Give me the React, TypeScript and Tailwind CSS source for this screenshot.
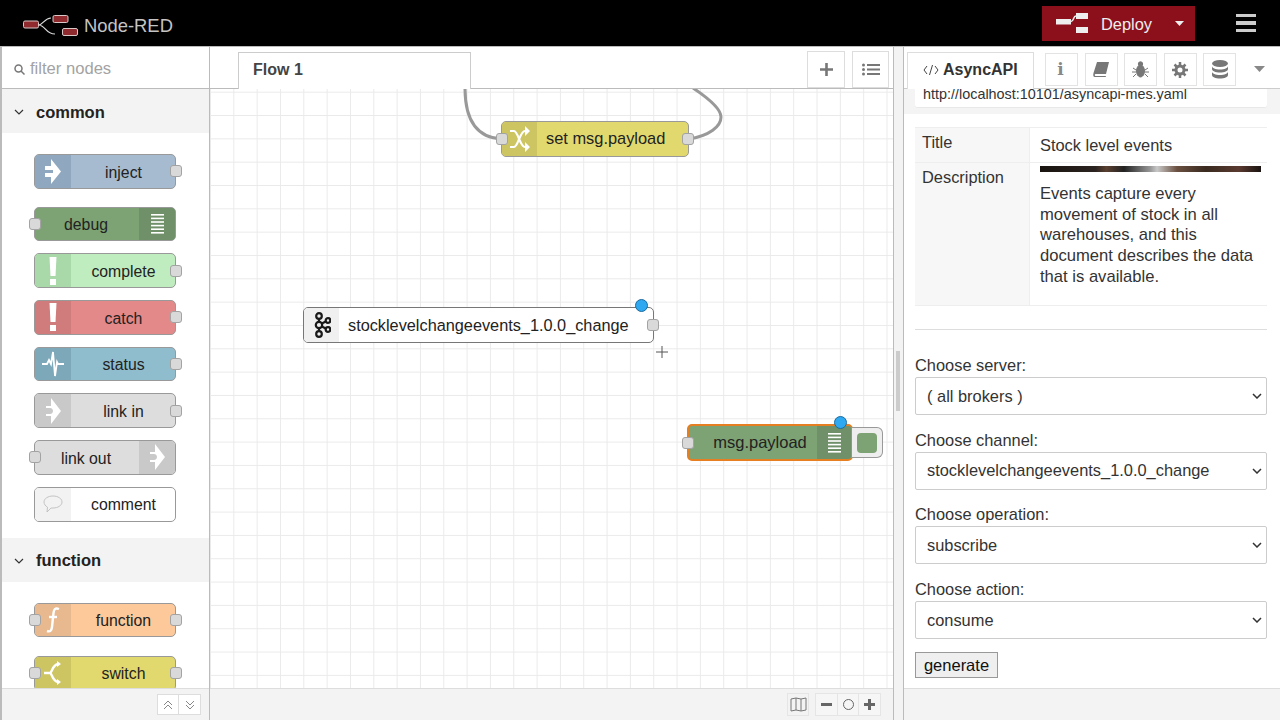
import type { ReactNode } from 'react';

const font = "font-['Liberation_Sans',Arial,sans-serif]";

function Port({ side, className = '' }: { side: 'left' | 'right'; className?: string }) {
  return (
    <span
      className={`absolute top-1/2 -translate-y-1/2 w-[12px] h-[12px] rounded-[3px] bg-[#d9d9d9] border border-[#a3a3a3] ${
        side === 'left' ? '-left-[6px]' : '-right-[7px]'
      } ${className}`}
    />
  );
}

function InjectIcon() {
  return (
    <svg width="16" height="25" viewBox="0 0 16 25" fill="#fff">
      <path d="M6 0l10 12.500L6 25v-7H0v-4h8v-3H0V7h6z" />
    </svg>
  );
}

function ListIcon() {
  return (
    <svg width="13" height="20" viewBox="0 0 13 20" fill="#fff">
      <rect y="0" width="13" height="1.600" />
      <rect y="3.600" width="13" height="1.600" />
      <rect y="7.200" width="13" height="1.600" />
      <rect y="10.800" width="13" height="1.600" />
      <rect y="14.400" width="13" height="1.600" />
      <rect y="18" width="13" height="1.600" />
    </svg>
  );
}

function AlertIcon() {
  return (
    <svg width="8" height="28" viewBox="0 0 8 28" fill="#fff">
      <path d="M0.500 0h7l-1 19h-5z" />
      <rect x="1" y="22" width="6" height="6" />
    </svg>
  );
}

function StatusIcon() {
  return (
    <svg width="22" height="26" viewBox="0 0 22 26" fill="none" stroke="#fff" strokeWidth="1.800">
      <path d="M0 13h5l2-4 2 4 2-12 2 24 2-14 1 2h6" />
    </svg>
  );
}

function LinkIcon() {
  return (
    <svg width="15" height="26" viewBox="0 0 15 26" fill="#fff">
      <path d="M5 0l10 13L5 26v-8H0v-2h4c4 0 4-6 0-6H0V8h5z" />
    </svg>
  );
}

function CommentIcon() {
  return (
    <svg width="20" height="18" viewBox="0 0 20 18" fill="none" stroke="#bdbdbd" strokeWidth="0.900">
      <path d="M10 1c5 0 9 2.600 9 6s-4 6-9 6H8l-4 4 .5-4.800C2.500 11 1 9.200 1 7c0-3.400 4-6 9-6z" />
    </svg>
  );
}

function FunctionIcon() {
  return (
    <svg width="14" height="26" viewBox="0 0 14 26" fill="none" stroke="#fff" strokeWidth="2.400">
      <path d="M13 2c-4-1.500-5 .5-5.500 4L6 20c-.5 4-2 5-5 4" />
      <path d="M3 10h8" />
    </svg>
  );
}

function SwitchIcon() {
  return (
    <svg width="18" height="24" viewBox="0 0 18 24" fill="none" stroke="#fff" strokeWidth="2.400">
      <path d="M0 12h6c2 0 2-8 8-9M6 12c2 0 2 8 8 9" />
      <path d="M13 0l4 3-4 3zM13 18l4 3-4 3z" fill="#fff" stroke="none" />
    </svg>
  );
}

function ShuffleIcon() {
  return (
    <svg width="20" height="26" viewBox="0 0 20 26" fill="none" stroke="#fff" strokeWidth="2.200">
      <path d="M0 5h4c4 0 6 16 11 16h1M0 21h4c4 0 6-16 11-16h1" />
      <path d="M15 0l5 5-5 5zM15 16l5 5-5 5z" fill="#fff" stroke="none" />
    </svg>
  );
}

function KafkaIcon() {
  return (
    <svg width="18" height="26" viewBox="0 0 18 26" fill="none" stroke="#1a1a1a" strokeWidth="2.200">
      <circle cx="6" cy="4" r="2.800" />
      <circle cx="6" cy="13" r="3.200" />
      <circle cx="6" cy="22" r="2.800" />
      <circle cx="15" cy="8.500" r="2.300" />
      <circle cx="15" cy="17.500" r="2.300" />
      <path d="M6 7v3M6 16v3M8.800 11.500l4-2M8.800 14.500l4 2" />
    </svg>
  );
}

function PaletteNode({
  label,
  bg,
  dark,
  border = 'border-[#999]',
  icon,
  right,
  inPort,
  outPort,
  className = '',
}: {
  label: string;
  bg: string;
  dark: string;
  border?: string;
  icon: ReactNode;
  right?: boolean;
  inPort?: boolean;
  outPort?: boolean;
  className?: string;
}) {
  return (
    <div className={`relative w-[142px] h-[34.700px] rounded-[5px] border ${border} ${bg} ${className}`}>
      <div className={`flex h-full ${right ? 'flex-row-reverse' : ''}`}>
        <div
          className={`w-[36px] shrink-0 flex items-center justify-center ${dark} ${
            right ? 'rounded-r-[4px]' : 'rounded-l-[4px]'
          }`}
        >
          {icon}
        </div>
        <div className={`flex-1 flex items-center justify-center text-[15.800px] pt-[2px] text-[#222] ${right ? 'pr-[2px]' : 'pl-[1px]'}`}>
          {label}
        </div>
      </div>
      {inPort && <Port side="left" />}
      {outPort && <Port side="right" />}
    </div>
  );
}

function CategoryHeader({ label }: { label: string }) {
  return (
    <div className="h-[44px] bg-[#f3f3f3] flex items-center pl-[12px] gap-[12px] pt-[2px]">
      <svg width="10" height="6" viewBox="0 0 10 6" fill="none" stroke="#333" strokeWidth="1.200">
        <path d="M1 1l4 4 4-4" />
      </svg>
      <span className="text-[16.500px] font-bold text-[#222]">{label}</span>
    </div>
  );
}

function Palette() {
  return (
    <aside className="w-[210px] shrink-0 flex flex-col border-l-2 border-r border-[#bbb] bg-white">
      <div className="h-[42px] shrink-0 flex items-center pl-[12px] gap-[5px] border-b border-[#bbb] pt-[3px]">
        <svg width="11" height="11" viewBox="0 0 11 11" fill="none" stroke="#777" strokeWidth="1.500">
          <circle cx="4.500" cy="4.500" r="3.500" />
          <path d="M7 7l3.500 3.500" />
        </svg>
        <span className="text-[16.600px] text-[#a3a3a3]">filter nodes</span>
      </div>
      <div className="flex-1 overflow-hidden">
        <CategoryHeader label="common" />
        <div className="pl-[32px] pt-[21px] pb-[16px] flex flex-col gap-[12px]">
          <PaletteNode label="inject" bg="bg-[#a6bbcf]" dark="bg-[#8fa8c0]" icon={<InjectIcon />} outPort />
          <PaletteNode label="debug" bg="bg-[#7da274]" dark="bg-[#6f9068]" icon={<ListIcon />} right inPort className="mt-[6px]" />
          <PaletteNode label="complete" bg="bg-[#c0edc0]" dark="bg-[#a9d8a9]" icon={<AlertIcon />} outPort />
          <PaletteNode label="catch" bg="bg-[#e48989]" dark="bg-[#d07c7c]" icon={<AlertIcon />} outPort />
          <PaletteNode label="status" bg="bg-[#8fbdce]" dark="bg-[#7da8b9]" icon={<StatusIcon />} outPort />
          <PaletteNode label="link in" bg="bg-[#dddddd]" dark="bg-[#c9c9c9]" icon={<LinkIcon />} outPort />
          <PaletteNode label="link out" bg="bg-[#dddddd]" dark="bg-[#c9c9c9]" icon={<LinkIcon />} right inPort />
          <PaletteNode label="comment" bg="bg-white" dark="bg-[#f2f2f2]" icon={<CommentIcon />} />
        </div>
        <CategoryHeader label="function" />
        <div className="pl-[32px] pt-[21px] flex flex-col gap-[18.700px]">
          <PaletteNode label="function" bg="bg-[#fdc89a]" dark="bg-[#e8b88f]" icon={<FunctionIcon />} inPort outPort />
          <PaletteNode label="switch" bg="bg-[#e2d96e]" dark="bg-[#cdc562]" icon={<SwitchIcon />} inPort outPort />
        </div>
      </div>
      <div className="h-[32px] shrink-0 bg-[#f3f3f3] border-t border-[#ddd] flex items-center justify-end pr-[8px]">
        <span className="w-[22px] h-[21px] bg-white border border-[#ddd] flex items-center justify-center">
          <svg width="10" height="10" viewBox="0 0 10 10" fill="none" stroke="#888" strokeWidth="1">
            <path d="M1 5l4-4 4 4M1 9l4-4 4 4" />
          </svg>
        </span>
        <span className="w-[22px] h-[21px] bg-white border border-l-0 border-[#ddd] flex items-center justify-center">
          <svg width="10" height="10" viewBox="0 0 10 10" fill="none" stroke="#888" strokeWidth="1">
            <path d="M1 1l4 4 4-4M1 5l4 4 4-4" />
          </svg>
        </span>
      </div>
    </aside>
  );
}

function Canvas() {
  return (
    <div className="relative flex-1 overflow-hidden bg-white bg-[linear-gradient(#eaeaea_1px,transparent_1px),linear-gradient(90deg,#eaeaea_1px,transparent_1px)] bg-[size:23.330px_23.330px] bg-[position:0px_2.700px]">
      <svg className="absolute inset-0" width="683" height="601" fill="none" stroke="#999" strokeWidth="3">
        <path d="M292 50C270 49 255 35 255 -1" />
        <path d="M478 50C500 47 511 37 511 28C511 19 495 7 483 -1" />
      </svg>

      {/* set msg.payload */}
      <div className="absolute left-[291px] top-[32px] w-[188px] h-[35.500px] rounded-[5px] border border-[#999] bg-[#e2d96e] flex">
        <div className="w-[35px] rounded-l-[4px] bg-[#cdc562] flex items-center justify-center">
          <ShuffleIcon />
        </div>
        <div className="flex-1 pl-[9px] flex items-center text-[16.400px] text-[#222]">set msg.payload</div>
        <Port side="left" />
        <Port side="right" className="mr-[1px]" />
      </div>

      {/* stocklevel node */}
      <div className="absolute left-[93px] top-[218px] w-[351px] h-[36px] rounded-[5px] border border-[#777] bg-white flex">
        <div className="w-[35px] rounded-l-[4px] bg-[#f0f0f0] flex items-center justify-center">
          <KafkaIcon />
        </div>
        <div className="flex-1 pl-[9px] flex items-center text-[16.300px] text-[#222]">stocklevelchangeevents_1.0.0_change</div>
        <Port side="right" className="mr-[1px]" />
        <span className="absolute right-[5px] -top-[9px] w-[13px] h-[13px] rounded-full bg-[#2ea8f0] border border-[#1a6ba0]" />
      </div>
      <svg className="absolute left-[446px] top-[257px]" width="12" height="12" stroke="#555" strokeWidth="1">
        <path d="M6 0v12M0 6h12" />
      </svg>

      {/* msg.payload debug node */}
      <div className="absolute left-[477px] top-[335px] w-[166px] h-[37px] rounded-[5px] border-[2.500px] border-[#e67e22] bg-[#7da274] flex">
        <div className="flex-1 pl-[14px] flex items-center justify-center text-[16.500px] text-[#222]">msg.payload</div>
        <div className="w-[34px] rounded-r-[3px] bg-[#6f9068] flex items-center justify-center">
          <ListIcon />
        </div>
        <Port side="left" className="-ml-[1.500px]" />
        <span className="absolute right-[4px] -top-[10px] w-[13px] h-[13px] rounded-full bg-[#2ea8f0] border border-[#1a6ba0]" />
      </div>
      <div className="absolute left-[642px] top-[338px] w-[31px] h-[31px] rounded-r-[6px] border border-l-0 border-[#999] bg-[#eeeeee] flex items-center justify-center">
        <span className="w-[20px] h-[20px] rounded-[4px] bg-[#7da274]" />
      </div>
    </div>
  );
}

function Workspace() {
  return (
    <section className="flex-1 min-w-0 flex flex-col">
      <div className="h-[42px] shrink-0 flex items-end pl-[28px] pr-[4px] border-b border-[#bbb] bg-white relative">
        <div className="w-[233px] h-[37px] -mb-px bg-white border border-b-0 border-[#ccc] flex items-center pl-[14px] pb-[2px] text-[16px] font-bold text-[#444]">
          Flow 1
        </div>
        <div className="ml-auto flex gap-[7px] self-center pt-[3px]">
          <span className="w-[38px] h-[37px] border border-[#ddd] flex items-center justify-center">
            <svg width="13" height="13" viewBox="0 0 13 13" stroke="#777" strokeWidth="2.600">
              <path d="M6.500 0v13M0 6.500h13" />
            </svg>
          </span>
          <span className="w-[37px] h-[37px] border border-[#ddd] flex items-center justify-center">
            <svg width="18" height="13" viewBox="0 0 18 13" fill="#777">
              <circle cx="1.500" cy="2" r="1.500" />
              <circle cx="1.500" cy="6.500" r="1.500" />
              <circle cx="1.500" cy="11" r="1.500" />
              <rect x="5" y="1" width="13" height="2" />
              <rect x="5" y="5.500" width="13" height="2" />
              <rect x="5" y="10" width="13" height="2" />
            </svg>
          </span>
        </div>
      </div>
      <Canvas />
      <div className="h-[32px] shrink-0 bg-[#f3f3f3] border-t border-[#ddd] flex items-center justify-end pr-[12px] gap-[6px]">
        <span className="w-[22px] h-[23px] border border-[#e5e5e5] flex items-center justify-center">
          <svg width="17" height="15" viewBox="0 0 17 15" fill="none" stroke="#777" strokeWidth="1">
            <path d="M1 2l5-1 5 1 5-1v12l-5 1-5-1-5 1zM6 1v12M11 2v12" />
          </svg>
        </span>
        <div className="flex h-[23px] border border-[#e5e5e5] bg-[#f6f6f6]">
          <span className="w-[21px] flex items-center justify-center">
            <span className="w-[11px] h-[3px] bg-[#666]" />
          </span>
          <span className="w-[22px] border-x border-[#e5e5e5] flex items-center justify-center">
            <span className="w-[11px] h-[11px] rounded-full border-[1.500px] border-[#666]" />
          </span>
          <span className="w-[21px] flex items-center justify-center">
            <svg width="11" height="11" viewBox="0 0 11 11" stroke="#666" strokeWidth="3">
              <path d="M5.500 0v11M0 5.500h11" />
            </svg>
          </span>
        </div>
      </div>
    </section>
  );
}

function TabIcon({ children }: { children: ReactNode }) {
  return (
    <span className="w-[33px] h-[33px] border border-[#e3e3e3] flex items-center justify-center">{children}</span>
  );
}

function Field({ label, value }: { label: string; value: string }) {
  return (
    <div className="mb-[15.700px]">
      <div className="text-[16.400px] leading-[18px] text-[#333] mb-[3px]">{label}</div>
      <div className="h-[38px] border border-[#ccc] rounded-[2px] bg-white flex items-center pl-[11px] pr-[4px] justify-between text-[16.400px] text-[#333]">
        {value}
        <svg width="10" height="6" viewBox="0 0 10 6" fill="none" stroke="#333" strokeWidth="1.500">
          <path d="M1 1l4 4 4-4" />
        </svg>
      </div>
    </div>
  );
}

function Sidebar() {
  return (
    <aside className="w-[377px] shrink-0 flex flex-col border-l border-[#bbb] bg-white">
      <div className="h-[42px] shrink-0 flex items-end border-b border-[#ccc] pl-[3px] relative">
        <div className="w-[127px] h-[37px] -mb-px bg-white border border-b-0 border-[#ddd] flex items-center pl-[15px] pb-[2px] gap-[4px] text-[16px] font-bold text-[#333]">
          <svg width="16" height="12" viewBox="0 0 16 12" fill="none" stroke="#444" strokeWidth="1">
            <path d="M4 2L1 6l3 4M12 2l3 4-3 4M9.500 1L6.500 11" />
          </svg>
          AsyncAPI
        </div>
        <div className="flex gap-[6.500px] ml-[11px] self-end mb-[2px]">
          <TabIcon>
            <span className="font-['DejaVu_Serif',serif] text-[17px] font-bold text-[#888] -ml-[2px]">i</span>
          </TabIcon>
          <TabIcon>
            <svg width="16" height="15" viewBox="0 0 16 15" fill="#777">
              <path d="M4 0h12l-3 12H2.500c-1 0-1 2 0 2H13l-.3 1H2C0 15 0 13 .5 11z" />
            </svg>
          </TabIcon>
          <TabIcon>
            <svg width="17" height="17" viewBox="0 0 17 17" fill="#777" stroke="#777" strokeWidth="1">
              <ellipse cx="8.500" cy="10" rx="4" ry="6" />
              <circle cx="8.500" cy="3" r="2.200" />
              <path d="M1 7l3 2M16 7l-3 2M0 11h4M17 11h-4M1 16l3-3M16 16l-3-3" fill="none" />
            </svg>
          </TabIcon>
          <TabIcon>
            <svg width="16" height="16" viewBox="0 0 16 16" fill="none" stroke="#777" strokeWidth="3">
              <circle cx="8" cy="8" r="4" />
              <path d="M8 0v3M8 13v3M0 8h3M13 8h3M2.500 2.500l2 2M11.500 11.500l2 2M2.500 13.500l2-2M11.500 4.500l2-2" strokeWidth="2.500" />
            </svg>
          </TabIcon>
          <TabIcon>
            <svg width="16" height="19" viewBox="0 0 16 19" fill="#777">
              <ellipse cx="8" cy="3.500" rx="8" ry="3.500" />
              <path d="M0 6c0 2 3.500 3.500 8 3.500S16 8 16 6v3c0 2-3.500 3.500-8 3.500S0 11 0 9z" />
              <path d="M0 11.500c0 2 3.500 3.500 8 3.500s8-1.500 8-3.500v3.500c0 2-3.500 3.500-8 3.500S0 17 0 15z" />
            </svg>
          </TabIcon>
        </div>
        <svg className="ml-auto mr-[15px] self-center mt-[3px]" width="11" height="6" viewBox="0 0 11 6" fill="#888">
          <path d="M0 0h11L5.500 6z" />
        </svg>
      </div>
      <div className="flex-1 pl-[11px] pr-[13px] flex flex-col">
        <div className="h-[25px] shrink-0 -ml-[11px] -mr-[13px] pl-[11px] pr-[13px] bg-[#f4f4f4]">
          <div className="h-[19px] rounded-b-[3px] bg-white pl-[8px] text-[14.400px] leading-[11px] text-[#333] border-b border-[#e8e8e8]">
            http://localhost:10101/asyncapi-mes.yaml
          </div>
        </div>
        <div className="mt-[13px] h-[179px] shrink-0 border-y border-[#eee] flex flex-col text-[16.400px] text-[#333]">
          <div className="flex h-[35px] border-b border-[#eee]">
            <div className="w-[115px] bg-[#f7f7f7] border-r border-[#eee] pl-[7px] pt-[2px]">Title</div>
            <div className="flex-1 pl-[10px] pt-[5px]">Stock level events</div>
          </div>
          <div className="flex flex-1">
            <div className="w-[115px] bg-[#f7f7f7] border-r border-[#eee] pl-[7px] pt-[2px]">Description</div>
            <div className="flex-1 pl-[10px] pr-[6px] pt-[3px]">
              <div className="h-[6px] bg-[linear-gradient(90deg,#1a1411_0%,#2a2320_25%,#5a4030_30%,#222_38%,#999_50%,#c8c8c8_53%,#6a5040_62%,#3a2a20_75%,#5a3a30_90%,#1a1411_100%)]" />
              <p className="mt-[12px] text-[16.600px] leading-[20.700px]">
                Events capture every movement of stock in all warehouses, and this document describes the data that is available.
              </p>
            </div>
          </div>
        </div>
        <div className="mt-[23px] shrink-0 border-t border-[#ddd]" />
        <div className="mt-[26px] shrink-0">
          <Field label="Choose server:" value="( all brokers )" />
          <Field label="Choose channel:" value="stocklevelchangeevents_1.0.0_change" />
          <Field label="Choose operation:" value="subscribe" />
          <Field label="Choose action:" value="consume" />
        </div>
        <div className="-mt-[3px]">
          <span className="inline-flex w-[83px] h-[26px] items-center justify-center border border-[#999] bg-[#efefef] pt-[1px] text-[16.500px] text-[#111]">
            generate
          </span>
        </div>
      </div>
      <div className="h-[32px] shrink-0 bg-[#f3f3f3] border-t border-[#ddd]" />
    </aside>
  );
}

export default function App() {
  return (
    <div className={`w-[1280px] h-[720px] flex flex-col overflow-hidden bg-white ${font}`}>
      <header className="h-[47px] shrink-0 bg-black border-b border-[#bbb] flex items-center pl-[23px] pr-[24px]">
        <div className="flex items-center pt-[6px]">
          <svg width="56" height="22" viewBox="0 0 56 22" fill="none">
            <path d="M15 10c6 0 6-7 13-7M15 10c8 0 7 9 17 9" stroke="#d9d9d9" strokeWidth="1.200" />
            <rect x="0.500" y="6" width="15" height="7" rx="1.500" fill="#8f2a2f" stroke="#d8c8c8" />
            <rect x="30" y="0.500" width="15" height="7" rx="1.500" fill="#8f2a2f" stroke="#d8c8c8" />
            <rect x="39.500" y="13.500" width="15" height="7" rx="1.500" fill="#8f2a2f" stroke="#d8c8c8" />
          </svg>
          <span className="ml-[5px] text-[18.400px] text-[#c4c4c4]">Node-RED</span>
        </div>
        <div className="ml-auto w-[153px] h-[35px] bg-[#8c101c] flex items-center text-[#eeeeee] text-[16.400px]">
          <svg className="ml-[14px]" width="32" height="20" viewBox="0 0 32 20" fill="#eee">
            <rect x="0" y="6" width="15" height="5.500" />
            <rect x="20" y="0" width="12" height="6" />
            <rect x="20" y="14" width="12" height="6" />
            <path d="M15 8.500c3 0 2-5.500 5-5.500" fill="none" stroke="#eee" strokeWidth="1.500" />
          </svg>
          <span className="ml-[13px] pt-[2px]">Deploy</span>
          <svg className="ml-[23px]" width="9" height="5" viewBox="0 0 9 5" fill="#eee">
            <path d="M0 0h9L4.500 5z" />
          </svg>
        </div>
        <div className="ml-[41px] flex flex-col gap-[4px]">
          <span className="w-[20px] h-[3.500px] bg-[#ccc]" />
          <span className="w-[20px] h-[3.500px] bg-[#ccc]" />
          <span className="w-[20px] h-[3.500px] bg-[#ccc]" />
        </div>
      </header>
      <main className="flex-1 min-h-0 flex">
        <Palette />
        <Workspace />
        <div className="w-[10px] shrink-0 bg-[#f3f3f3] border-l border-[#bbb] relative">
          <span className="absolute left-[2px] top-[304px] w-[4px] h-[60px] bg-[#ccc]" />
        </div>
        <Sidebar />
      </main>
    </div>
  );
}
